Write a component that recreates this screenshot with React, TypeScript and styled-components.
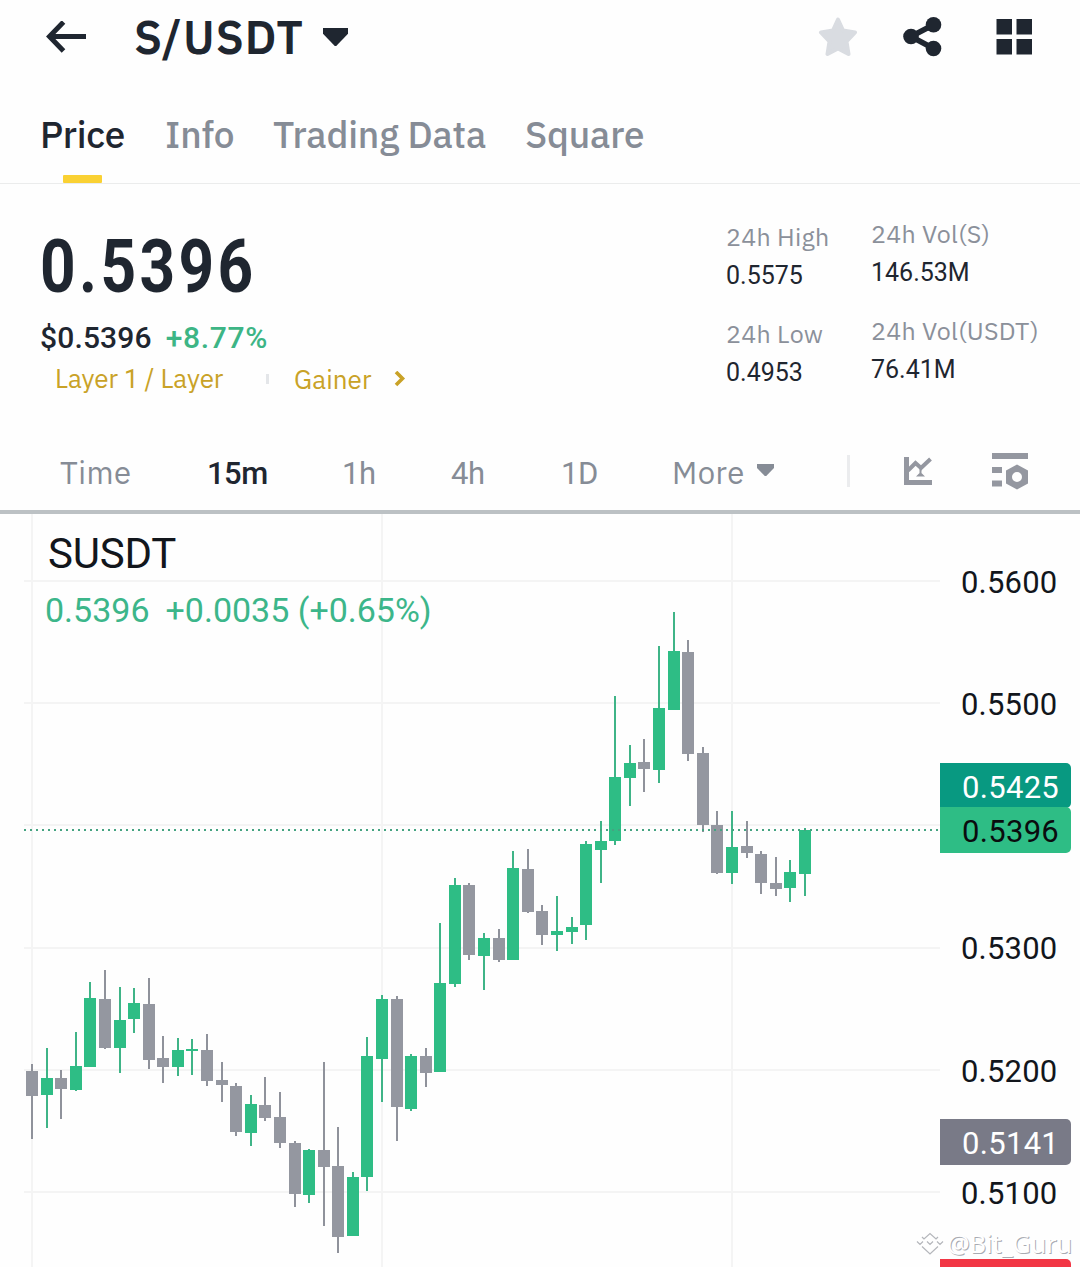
import React from 'react';
import styled, { createGlobalStyle } from 'styled-components';

const Global = createGlobalStyle`
  * { box-sizing: border-box; }
  body { margin: 0; background: #fefefe; }
`;

const ui = `'IBM Plex Sans', Roboto, 'Noto Sans', sans-serif`;
const numeric = `Roboto, 'Noto Sans', sans-serif`;
const ink = '#1f2630';
const muted = '#868c96';
const up = '#2ebd85';
const down = '#9497a0';

const Screen = styled.div`
  width: 1080px;
  height: 1267px;
  overflow: hidden;
  display: flex;
  flex-direction: column;
  background: #fefefe;
  color: ${ink};
  font-family: ${ui};
`;

const Header = styled.header`
  height: 74px;
  flex: none;
  display: flex;
  align-items: center;
  padding: 0 37px 0 46px;
`;

const Pair = styled.h1`
  margin: 0 0 0 48px;
  width: 189px;
  font-size: 46px;
  line-height: 74px;
  font-weight: 600;
  letter-spacing: 1px;
  white-space: nowrap;
`;

const HeaderActions = styled.div`
  margin-left: auto;
  display: flex;
  align-items: center;
  gap: 45px;
  svg { display: block; }
`;

const Tabs = styled.nav`
  height: 110px;
  flex: none;
  display: flex;
  padding-left: 40px;
  border-bottom: 1px solid #ebecec;
`;

const Tab = styled.div<{ $w: number; $active?: boolean }>`
  width: ${p => p.$w}px;
  padding-top: 36px;
  display: flex;
  flex-direction: column;
  justify-content: space-between;
  font-size: 37px;
  line-height: 48px;
  font-weight: 500;
  letter-spacing: -0.15px;
  color: ${p => (p.$active ? ink : muted)};
  white-space: nowrap;
`;

const Indicator = styled.i`
  display: block;
  width: 39px;
  height: 8px;
  margin-left: 23px;
  border-radius: 1px;
  background: #fad133;
`;

const Summary = styled.section`
  height: 248px;
  flex: none;
  display: flex;
`;

const PriceBlock = styled.div`
  width: 726px;
  padding: 39px 0 0 40px;
`;

const Price = styled.div`
  font-family: ${numeric};
  font-size: 74px;
  line-height: 88px;
  font-weight: 700;
  letter-spacing: 4px;
  transform: scaleX(0.84);
  transform-origin: left;
`;

const Change = styled.div`
  display: flex;
  gap: 14px;
  margin-top: 9px;
  font-family: ${numeric};
  font-size: 30px;
  line-height: 36px;
  font-weight: 500;
  letter-spacing: 0.15px;
  b { font-weight: 500; letter-spacing: 0.7px; color: #3db585; }
`;

const Tags = styled.div`
  display: flex;
  align-items: center;
  margin: 4px 0 0 15px;
  font-size: 26px;
  line-height: 36px;
  letter-spacing: -0.1px;
  color: #c9a227;
  i { width: 3px; height: 10px; background: #e4e6e9; margin-right: 25px; }
  svg { margin-left: 22px; }
`;

const Sector = styled.span`
  width: 211px;
`;

const Gainer = styled.span`
  letter-spacing: 0.1px;
`;

const Digits = styled.span`
  font-family: ${numeric};
`;

const StatColumn = styled.div<{ $w: number; $top: number }>`
  width: ${p => p.$w}px;
  padding-top: ${p => p.$top}px;
  display: flex;
  flex-direction: column;
  gap: 20px;
`;

const Stat = styled.div`
  font-size: 25px;
  letter-spacing: 0.25px;
  white-space: nowrap;
  span { display: block; line-height: 37px; color: #8b909a; }
  strong {
    display: block;
    padding-top: 2px;
    line-height: 38px;
    font-family: ${numeric};
    font-weight: 400;
    letter-spacing: 0;
  }
`;

const Intervals = styled.div`
  height: 82px;
  flex: none;
  display: flex;
  align-items: center;
  padding-left: 60px;
  border-bottom: 4px solid #bcc1c4;
`;

const Interval = styled.div<{ $w: number; $active?: boolean; $digits?: boolean }>`
  width: ${p => p.$w}px;
  padding-top: ${p => (p.$digits ? 4 : 2)}px;
  display: flex;
  align-items: center;
  gap: 12px;
  font-family: ${p => (p.$digits ? numeric : ui)};
  font-size: 31px;
  letter-spacing: ${p => (p.$digits ? -0.5 : 0.5)}px;
  color: ${p => (p.$active ? ink : muted)};
  font-weight: ${p => (p.$active ? 500 : 400)};
  svg { margin-bottom: 4px; }
`;

const Rule = styled.i`
  width: 3px;
  height: 32px;
  margin-right: 54px;
  background: #ebecee;
`;

const ToolIcons = styled.div`
  display: flex;
  align-items: center;
  gap: 58px;
  svg { display: block; }
`;

const Chart = styled.main`
  position: relative;
  flex: 1;
  display: flex;
  font-family: Roboto, sans-serif;
`;

const Plot = styled.svg`
  display: block;
  flex: none;
`;

const Legend = styled.div`
  position: absolute;
  left: 45px;
  top: 16px;
  white-space: nowrap;
`;

const Symbol = styled.div`
  padding-left: 3px;
  width: 136px;
  font-size: 42px;
  line-height: 48px;
  letter-spacing: -0.2px;
  color: #12161c;
`;

const Quote = styled.div`
  margin-top: 8px;
  display: flex;
  gap: 16px;
  font-size: 34px;
  line-height: 48px;
  color: #3cb68a;
`;

const Axis = styled.div`
  position: relative;
  width: 140px;
  padding-top: 8px;
  color: #12161c;
`;

const Tick = styled.div`
  height: 122.15px;
  padding-left: 21px;
  font-size: 31px;
  line-height: 122px;
  letter-spacing: 0.2px;
`;

const Badge = styled.div<{ $top: number; $bg: string; $fg: string; $h: number; $lh?: number }>`
  position: absolute;
  left: 0;
  top: ${p => p.$top}px;
  width: 131px;
  height: ${p => p.$h}px;
  padding-left: 22px;
  border-radius: 0 5px 5px 0;
  font-size: 31px;
  line-height: ${p => p.$lh ?? p.$h + 3}px;
  letter-spacing: 0.3px;
  background: ${p => p.$bg};
  color: ${p => p.$fg};
`;

const Watermark = styled.div`
  position: absolute;
  right: 8px;
  bottom: 7px;
  display: flex;
  align-items: center;
  gap: 3px;
  font: 400 25px/34px 'Noto Sans', sans-serif;
  color: #fff;
  text-shadow: 1px 1px 0 #a9abb2;
`;

// [high, body top, body bottom, low, rising]
const candles: [number, number, number, number, number][] = [
  [1064, 1071, 1096, 1139, 0], [1048, 1078, 1095, 1128, 1], [1070, 1078, 1089, 1119, 0],
  [1032, 1066, 1090, 1091, 1], [982, 998, 1067, 1067, 1], [970, 999, 1048, 1049, 0],
  [987, 1020, 1048, 1073, 1], [988, 1003, 1019, 1033, 1], [978, 1004, 1060, 1069, 0],
  [1036, 1058, 1067, 1083, 0], [1038, 1050, 1067, 1076, 1], [1039, 1049, 1051, 1075, 1],
  [1034, 1050, 1081, 1086, 0], [1062, 1080, 1085, 1102, 0], [1083, 1086, 1132, 1136, 0],
  [1095, 1104, 1133, 1146, 1], [1077, 1105, 1118, 1121, 0], [1092, 1117, 1143, 1148, 0],
  [1141, 1143, 1194, 1207, 0], [1149, 1150, 1195, 1203, 1], [1062, 1150, 1167, 1226, 0],
  [1127, 1166, 1237, 1253, 0], [1172, 1177, 1236, 1236, 1], [1037, 1056, 1177, 1191, 1],
  [995, 999, 1059, 1102, 1], [996, 999, 1107, 1141, 0], [1054, 1056, 1109, 1111, 1],
  [1048, 1056, 1073, 1087, 0], [923, 983, 1072, 1072, 1], [878, 885, 984, 987, 1],
  [883, 885, 955, 960, 0], [933, 938, 956, 990, 1], [929, 938, 960, 962, 0],
  [851, 868, 960, 960, 1], [849, 869, 912, 913, 0], [905, 911, 935, 945, 0],
  [896, 931, 935, 951, 1], [917, 927, 932, 944, 1], [841, 844, 925, 940, 1],
  [821, 841, 850, 883, 1], [696, 777, 841, 845, 1], [745, 763, 778, 806, 1],
  [739, 762, 769, 792, 0], [646, 708, 770, 783, 1], [612, 651, 710, 710, 1],
  [640, 652, 754, 761, 0], [747, 753, 825, 832, 0], [811, 825, 873, 874, 0],
  [811, 847, 873, 884, 1], [821, 846, 853, 858, 0], [851, 854, 883, 894, 0],
  [857, 883, 889, 896, 0], [860, 872, 888, 902, 1], [828, 830, 874, 896, 1],
];

const Caret = ({ w, color }: { w: number; color: string }) => (
  <svg width={w} height={w * 0.75} viewBox="0 0 24 18">
    <path d="M0 0H24V5.500L12 18L0 5.500Z" fill={color} />
  </svg>
);

const CandlePlot = () => (
  <Plot width="940" height="753" viewBox="0 514 940 753" shapeRendering="crispEdges">
    {[32, 382, 732].map(x => <rect key={x} x={x - 1} y="514" width="2" height="753" fill="#f4f4f4" />)}
    {[581, 703, 825, 948, 1070, 1192].map(y => <rect key={y} x="24" y={y - 1} width="916" height="2" fill="#f4f4f4" />)}
    {candles.map(([hi, top, bot, lo, rising], i) => {
      const x = Math.round(32.05 + i * 14.581);
      return (
        <g key={i} fill={rising ? up : down}>
          <rect x={x - 1} y={hi} width="2" height={lo - hi} fill={rising ? '#3fb487' : '#8f929b'} />
          <rect x={x - 6} y={top} width="12" height={bot - top} />
        </g>
      );
    })}
    <line x1="24" x2="940" y1="830" y2="830" stroke="#45a381" strokeWidth="2" strokeDasharray="2 4" />
  </Plot>
);

export default function App() {
  return (
    <Screen>
      <Global />
      <Header>
        <svg width="40" height="32" viewBox="0 0 40 32" fill="none" stroke={ink} strokeWidth="5">
          <path d="M40 15.500H4M17.500 1L3.500 15.500L17.500 30" />
        </svg>
        <Pair>S/USDT</Pair>
        <Caret w={25} color={ink} />
        <HeaderActions>
          <svg width="40" height="40" viewBox="0 0 40 40" fill="#d9dce1" stroke="#d9dce1" strokeWidth="4" strokeLinejoin="round">
            <path d="M20 2.500L25 13.500L37 15.500L28.500 24.500L30.500 37L20 31.500L9.500 37L11.500 24.500L3 15.500L15 13.500Z" />
          </svg>
          <svg width="39" height="40" viewBox="0 0 39 40" fill={ink}>
            <path d="M8 19.500L30.500 7.800M8 19.500L30.500 31.500" stroke={ink} strokeWidth="5.500" />
            <circle cx="8" cy="19.500" r="7.800" /><circle cx="30.500" cy="7.800" r="7.800" /><circle cx="30.500" cy="31.500" r="7.800" />
          </svg>
          <svg width="56" height="36" viewBox="-9 0 56 36" fill={ink}>
            <path d="M0.500 0H16V15.500H0.500ZM20.500 0H36V15.500H20.500ZM0.500 20H16V35.500H0.500ZM20.500 20H36V35.500H20.500Z" />
          </svg>
        </HeaderActions>
      </Header>

      <Tabs>
        <Tab $w={125} $active>Price<Indicator /></Tab>
        <Tab $w={108}>Info</Tab>
        <Tab $w={252}>Trading Data</Tab>
        <Tab $w={140}>Square</Tab>
      </Tabs>

      <Summary>
        <PriceBlock>
          <Price>0.5396</Price>
          <Change><span>$0.5396</span><b>+8.77%</b></Change>
          <Tags>
            <Sector>Layer <Digits>1</Digits> / Layer</Sector><i /><Gainer>Gainer</Gainer>
            <svg width="12" height="16" viewBox="0 0 12 16" fill="none" stroke="#c9a227" strokeWidth="3.600">
              <path d="M2 1L8.500 7.500L2 14" />
            </svg>
          </Tags>
        </PriceBlock>
        <StatColumn $w={145} $top={34}>
          <Stat><span>24h High</span><strong>0.5575</strong></Stat>
          <Stat><span>24h Low</span><strong>0.4953</strong></Stat>
        </StatColumn>
        <StatColumn $w={209} $top={31}>
          <Stat><span>24h Vol(S)</span><strong>146.53M</strong></Stat>
          <Stat><span>24h Vol(USDT)</span><strong>76.41M</strong></Stat>
        </StatColumn>
      </Summary>

      <Intervals>
        <Interval $w={147}>Time</Interval>
        <Interval $w={135} $active $digits>15m</Interval>
        <Interval $w={109} $digits>1h</Interval>
        <Interval $w={110} $digits>4h</Interval>
        <Interval $w={111} $digits>1D</Interval>
        <Interval $w={175}>More <Caret w={17} color={muted} /></Interval>
        <Rule />
        <ToolIcons>
          <svg width="30" height="30" viewBox="0 0 30 30" fill="none" stroke={down}>
            <path d="M2.500 1V26.500H28" strokeWidth="5" />
            <path d="M4 14.500L11.500 7L17 12L26.500 3" strokeWidth="4" />
            <path d="M12 20.500L16.500 16L21 20.500Z M15.500 13H17.500V18H15.500Z" fill={down} stroke="none" />
          </svg>
          <svg width="36" height="38" viewBox="0 0 36 38" fill={down}>
            <path d="M0 1H36V7H0ZM0 15H10V21H0ZM0 28.500H10V34.500H0Z" />
            <path fillRule="evenodd" d="M25 12.500L36 18.500V31.500L25 37.500L14 31.500V18.500ZM25 20A5 5 0 1 0 25 30A5 5 0 1 0 25 20Z" />
          </svg>
        </ToolIcons>
      </Intervals>

      <Chart>
        <CandlePlot />
        <Axis>
          <Tick>0.5600</Tick>
          <Tick>0.5500</Tick>
          <Tick />
          <Tick>0.5300</Tick>
          <Tick>0.5200</Tick>
          <Tick>0.5100</Tick>
          <Badge $top={249} $h={45} $lh={50} $bg="#089981" $fg="#fff">0.5425</Badge>
          <Badge $top={293} $h={46} $bg={up} $fg="#0a0c0e">0.5396</Badge>
          <Badge $top={605} $h={46} $bg="#797a87" $fg="#fff">0.5141</Badge>
          <Badge $top={745} $h={46} $bg="#f23645" $fg="#fff" />
        </Axis>
        <Legend>
          <Symbol>SUSDT</Symbol>
          <Quote><span>0.5396</span><span>+0.0035 (+0.65%)</span></Quote>
        </Legend>
        <Watermark>
          <svg width="28" height="24" viewBox="0 0 28 24" fill="none" stroke="#b4b6bb" strokeWidth="1.200">
            <path d="M6 6L8 8L14 2.500L20 8L22 6M1 10.500L4 13.500L7 10.500M11 10.500L14 13.500L17 10.500M21 10.500L24 13.500L27 10.500M6 15.500L14 23L22 15.500" />
          </svg>
          <span>@Bit_Guru</span>
        </Watermark>
      </Chart>
    </Screen>
  );
}
